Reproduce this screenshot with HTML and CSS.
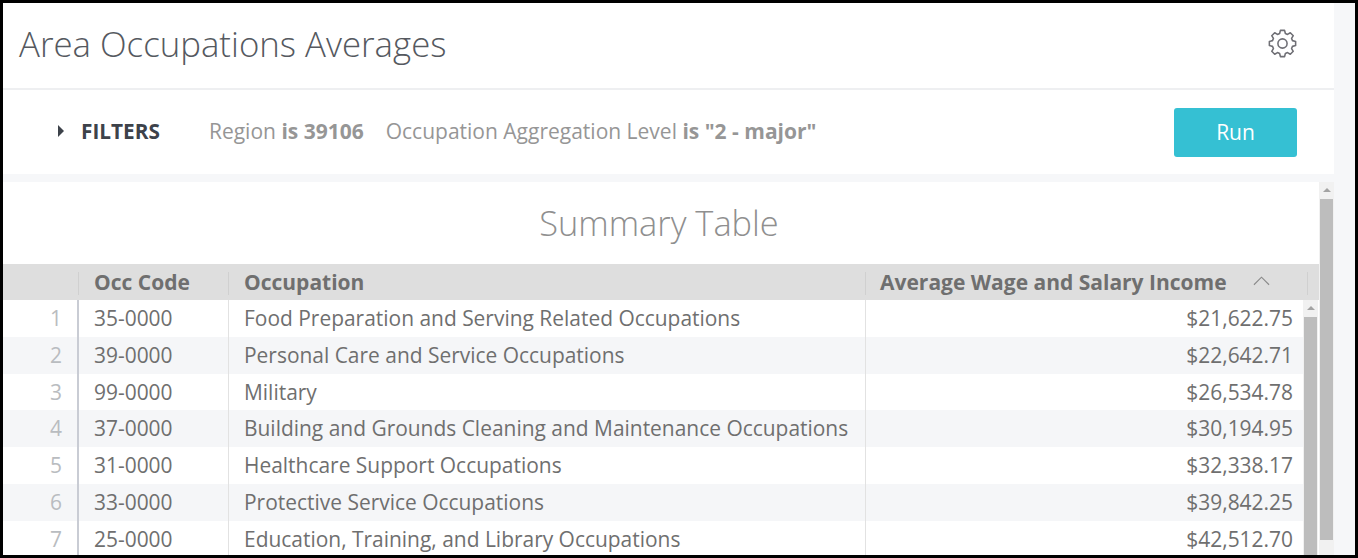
FILE: index.html
```html
<!DOCTYPE html>
<html>
<head>
    <meta charset="UTF-8">
    <title>Area Occupations Averages</title>
    <link rel="stylesheet" href="styles.css">
</head>
<body>
    <div class="frame">
        <div class="main">
            <div class="page-header">
                <h1>Area Occupations Averages</h1>
                <svg class="gear" viewBox="0 0 24 24" fill="none" stroke="#6f6f75" stroke-width="1.3" stroke-linejoin="round">
                    <circle cx="12" cy="12" r="3.8"/>
                    <path d="M9.63 3.73 10.28 1.14H13.72L14.37 3.73 16.17 4.48 18.47 3.1 20.9 5.53 19.52 7.83 20.27 9.63 22.86 10.28V13.72L20.27 14.37 19.52 16.17 20.9 18.47 18.47 20.9 16.17 19.52 14.37 20.27 13.72 22.86H10.28L9.63 20.27 7.83 19.52 5.53 20.9 3.1 18.47 4.48 16.17 3.73 14.37 1.14 13.72V10.28L3.73 9.63 4.48 7.83 3.1 5.53 5.53 3.1 7.83 4.48Z"/>
                </svg>
            </div>
            <div class="filters">
                <span class="filters-arrow"></span>
                <span class="filters-label">FILTERS</span>
                <span class="filter">Region <b>is 39106</b></span>
                <span class="filter">Occupation Aggregation Level <b>is "2 - major"</b></span>
                <button class="run-btn">Run</button>
            </div>
            <div class="panel">
                <div class="panel-body">
                    <h2>Summary Table</h2>
                    <div class="table-head">
                        <div class="cell col-index"></div>
                        <div class="cell col-code">Occ Code</div>
                        <div class="cell col-name">Occupation</div>
                        <div class="cell col-wage">
                            Average Wage and Salary Income
                            <svg class="sort-icon" viewBox="0 0 18 11" fill="none" stroke="#8a8a8a" stroke-width="1.2"><path d="M1 10 9 2l8 8"/></svg>
                        </div>
                    </div>
                    <div class="table-wrap">
                        <div class="rows">
                            <div class="row">
                                <div class="cell col-index">1</div>
                                <div class="cell col-code">35-0000</div>
                                <div class="cell col-name">Food Preparation and Serving Related Occupations</div>
                                <div class="cell col-wage">$21,622.75</div>
                            </div>
                            <div class="row">
                                <div class="cell col-index">2</div>
                                <div class="cell col-code">39-0000</div>
                                <div class="cell col-name">Personal Care and Service Occupations</div>
                                <div class="cell col-wage">$22,642.71</div>
                            </div>
                            <div class="row">
                                <div class="cell col-index">3</div>
                                <div class="cell col-code">99-0000</div>
                                <div class="cell col-name">Military</div>
                                <div class="cell col-wage">$26,534.78</div>
                            </div>
                            <div class="row">
                                <div class="cell col-index">4</div>
                                <div class="cell col-code">37-0000</div>
                                <div class="cell col-name">Building and Grounds Cleaning and Maintenance Occupations</div>
                                <div class="cell col-wage">$30,194.95</div>
                            </div>
                            <div class="row">
                                <div class="cell col-index">5</div>
                                <div class="cell col-code">31-0000</div>
                                <div class="cell col-name">Healthcare Support Occupations</div>
                                <div class="cell col-wage">$32,338.17</div>
                            </div>
                            <div class="row">
                                <div class="cell col-index">6</div>
                                <div class="cell col-code">33-0000</div>
                                <div class="cell col-name">Protective Service Occupations</div>
                                <div class="cell col-wage">$39,842.25</div>
                            </div>
                            <div class="row">
                                <div class="cell col-index">7</div>
                                <div class="cell col-code">25-0000</div>
                                <div class="cell col-name">Education, Training, and Library Occupations</div>
                                <div class="cell col-wage">$42,512.70</div>
                            </div>
                        </div>
                        <div class="scrollbar scrollbar-inner">
                            <span class="scroll-arrow"></span>
                            <div class="scroll-thumb"></div>
                        </div>
                    </div>
                </div>
                <div class="scrollbar scrollbar-outer">
                    <span class="scroll-arrow"></span>
                    <div class="scroll-thumb"></div>
                </div>
            </div>
        </div>
    </div>
</body>
</html>
```

FILE: styles.css
```css
/* page frame */
html, body {
    margin: 0;
    height: 100%;
    overflow: hidden;
}

body {
    font-family: "Open Sans", sans-serif;
    color: #6f6f6f;
}

.frame {
    box-sizing: border-box;
    width: 1358px;
    height: 558px;
    overflow: hidden;
    border: 3px solid #000;
    background-color: #f6f7f9;
}

.main {
    width: 1331px;
}

/* title bar */
.page-header {
    display: flex;
    align-items: center;
    justify-content: space-between;
    box-sizing: border-box;
    height: 87px;
    padding: 0 37px 4px 16px;
    background-color: #fff;
    border-bottom: 2px solid #eeeff1;
}

h1 {
    margin: 0;
    font-size: 34.8px;
    font-weight: 300;
    color: #55595f;
}

.gear {
    width: 29px;
    height: 29px;
}

/* filter bar */
.filters {
    display: flex;
    align-items: center;
    height: 84px;
    padding-left: 55px;
    background-color: #fff;
    font-size: 21px;
    color: #969696;
}

.filters-arrow {
    width: 0;
    height: 0;
    margin-right: 17px;
    margin-bottom: 3px;
    border-top: 6px solid transparent;
    border-bottom: 6px solid transparent;
    border-left: 6px solid #3d424a;
}

.filters-label {
    margin-right: 49px;
    margin-bottom: 3px;
    font-size: 20.8px;
    font-weight: 700;
    color: #3d424a;
}

.filter {
    margin-right: 22px;
    margin-bottom: 2px;
}

.run-btn {
    width: 123px;
    height: 49px;
    margin-left: auto;
    margin-right: 37px;
    border: none;
    border-radius: 3px;
    background-color: #35c0d3;
    color: #fff;
    font-family: inherit;
    font-size: 21px;
}

/* summary panel */
.panel {
    display: flex;
    height: 373px;
    margin-top: 8px;
}

.panel-body {
    flex: 1;
    min-width: 0;
    background-color: #fff;
}

h2 {
    display: flex;
    align-items: center;
    justify-content: center;
    height: 80px;
    margin: 0 0 2px;
    padding-right: 4px;
    font-size: 34.4px;
    font-weight: 300;
    color: #8f8f8f;
}

.table-head,
.row {
    display: flex;
    font-size: 20.95px;
}

.table-head {
    height: 36px;
    background-color: #dedede;
    font-size: 21px;
    font-weight: 700;
}

.table-head .cell {
    margin: 8px 0 5px;
    line-height: 20px;
    border-right: 1px solid #d0d0d0;
}

.table-wrap {
    display: flex;
}

.rows {
    flex: 1;
    min-width: 0;
}

.row {
    height: 36.75px;
    line-height: 36px;
}

.row:nth-child(even) {
    background-color: #f5f6f8;
}

.cell {
    box-sizing: border-box;
    white-space: nowrap;
    border-right: 1px solid #e2e2e2;
}

.col-index {
    width: 76px;
    padding-right: 15px;
    text-align: right;
    color: #b9bcc0;
    border-right: 2px solid #c9ccd4;
}

.col-code {
    width: 150px;
    padding-left: 15px;
}

.col-name {
    width: 637px;
    padding-left: 15px;
}

.col-wage {
    flex: 1;
    padding-right: 10px;
    text-align: right;
    border-right: none;
}

.table-head .col-wage {
    display: flex;
    align-items: flex-start;
    flex: 0 0 442px;
    padding-left: 14px;
    padding-right: 0;
    text-align: left;
}

.sort-icon {
    width: 17px;
    height: 11px;
    margin: 3px 37px 0 auto;
}

/* scrollbars */
.scrollbar {
    display: flex;
    flex-direction: column;
    align-items: center;
    background-color: #f1f1f1;
}

.scrollbar-inner {
    flex: 0 0 15px;
    margin-right: 1px;
}

.scrollbar-outer {
    flex: 0 0 15px;
}

.scroll-arrow {
    flex: none;
    width: 0;
    height: 0;
    margin: 6px 0 7px;
    border-left: 4px solid transparent;
    border-right: 4px solid transparent;
    border-bottom: 4px solid #a3a3a3;
}

.scroll-thumb {
    width: 13px;
    height: 341px;
    background-color: #bdbdbd;
}

.scrollbar-inner .scroll-thumb {
    height: 300px;
}
```
